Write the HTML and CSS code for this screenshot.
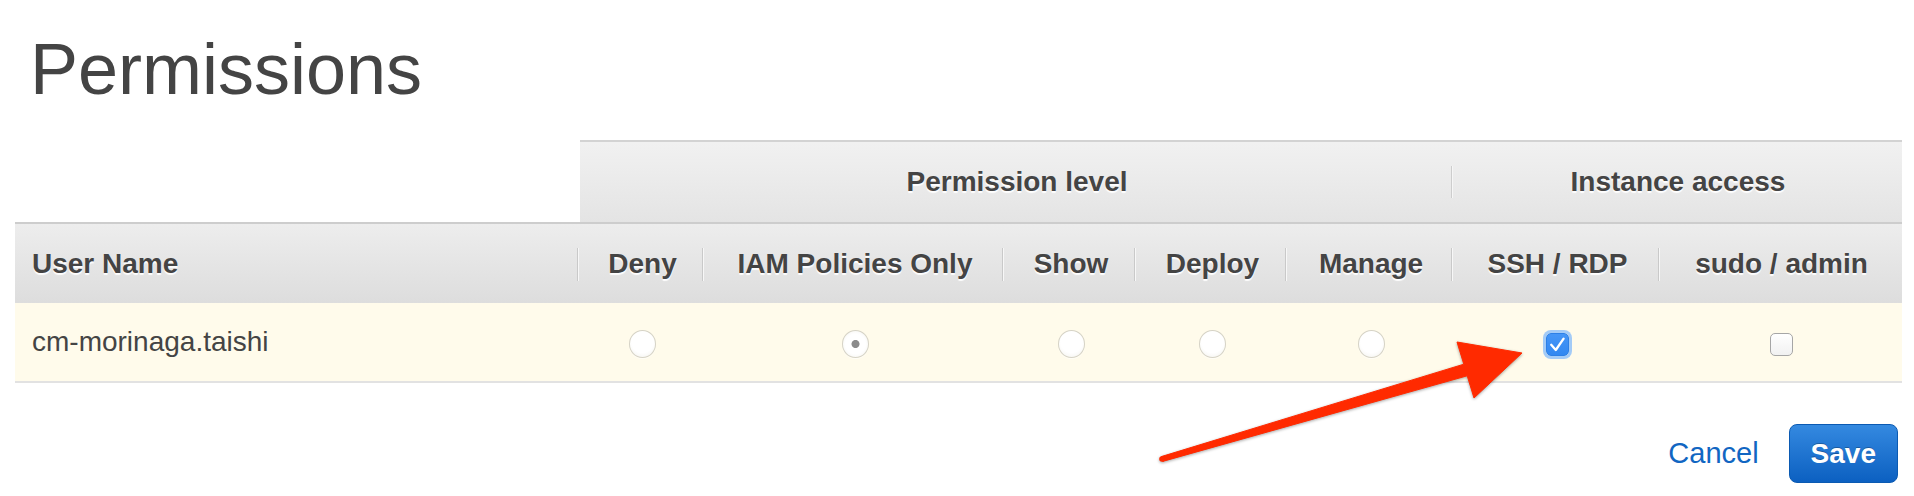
FILE: index.html
```html
<!DOCTYPE html>
<html lang="en">
<head>
<meta charset="utf-8">
<title>Permissions</title>
<link rel="stylesheet" href="styles.css">
</head>
<body>
<div class="page">
  <h1 class="title">Permissions</h1>
  <table class="perm">
    <colgroup>
      <col class="c-user"><col class="c-deny"><col class="c-iam"><col class="c-show"><col class="c-deploy"><col class="c-manage"><col class="c-ssh"><col class="c-sudo">
    </colgroup>
    <thead>
      <tr class="group">
        <th class="blank"></th>
        <th class="band" colspan="5">Permission level</th>
        <th class="band sep" colspan="2">Instance access</th>
      </tr>
      <tr class="cols">
        <th class="user">User Name</th>
        <th class="div">Deny</th>
        <th class="div">IAM Policies Only</th>
        <th class="div">Show</th>
        <th class="div">Deploy</th>
        <th class="div">Manage</th>
        <th class="div">SSH / RDP</th>
        <th class="div">sudo / admin</th>
      </tr>
    </thead>
    <tbody>
      <tr class="row">
        <td class="name">cm-morinaga.taishi</td>
        <td><span class="radio" role="radio" aria-checked="false"></span></td>
        <td><span class="radio on" role="radio" aria-checked="true"></span></td>
        <td><span class="radio" role="radio" aria-checked="false"></span></td>
        <td><span class="radio" role="radio" aria-checked="false"></span></td>
        <td><span class="radio" role="radio" aria-checked="false"></span></td>
        <td><span class="check on" role="checkbox" aria-checked="true"><svg width="23" height="23" viewBox="0 0 23 23"><path d="M5.2 11.8 L9.8 17 L17.6 5.6" fill="none" stroke="#fff" stroke-width="2.3" stroke-linecap="round" stroke-linejoin="round"/></svg></span></td>
        <td><span class="check" role="checkbox" aria-checked="false"></span></td>
      </tr>
    </tbody>
  </table>
  <div class="actions">
    <a class="cancel" href="#">Cancel</a>
    <button class="save" type="button">Save</button>
  </div>
</div>
<svg class="arrow" width="1914" height="496" viewBox="0 0 1914 496">
  <polygon points="1161.3,456.6 1463.8,364.2 1457,342 1522,353 1474,398 1467.2,375.8 1162.7,461.4" fill="#ff2a00" stroke="#ff2a00" stroke-width="1" stroke-linejoin="round"/>
  <circle cx="1162" cy="459" r="2.8" fill="#ff2a00"/>
</svg>
</body>
</html>
```

FILE: styles.css
```css
html, body {
  margin: 0;
  padding: 0;
  background: #ffffff;
}

body {
  position: relative;
  font-family: "Liberation Sans", Arial, Helvetica, sans-serif;
  color: #444444;
}

.page {
  padding: 27px 12px 0 15px;
}

.title {
  margin: 0 0 29px 15px;
  font-size: 72px;
  line-height: 84px;
  font-weight: 400;
  color: #444444;
}

.perm {
  border-collapse: separate;
  border-spacing: 0;
  table-layout: fixed;
  width: 1887px;
}

.c-user { width: 565px; }
.c-deny { width: 125px; }
.c-iam { width: 300px; }
.c-show { width: 132px; }
.c-deploy { width: 151px; }
.c-manage { width: 166px; }
.c-ssh { width: 207px; }
.c-sudo { width: 241px; }

.perm th {
  position: relative;
  padding: 0;
  font-size: 28px;
  font-weight: 700;
  color: #444444;
  text-shadow: 0 2px 1px rgba(255, 255, 255, 0.95);
  text-align: center;
  vertical-align: middle;
  white-space: nowrap;
}

.group {
  height: 82px;
}

.blank {
  border-top: 2px solid transparent;
  background: #ffffff;
}

.band {
  border-top: 2px solid #d3d3d3;
  background: linear-gradient(#f1f1f1, #e4e4e4);
}

.band.sep::before {
  content: "";
  position: absolute;
  left: -3px;
  top: 24px;
  width: 1px;
  height: 32px;
  background: #cdcdcd;
  box-shadow: 1px 0 0 #f6f6f6;
}

.cols {
  height: 81px;
}

.cols th {
  border-top: 2px solid #cdcdcd;
  background: linear-gradient(#ededed, #dddddd);
}

.cols th.user {
  text-align: left;
  padding-left: 17px;
}

.cols th.div::before {
  content: "";
  position: absolute;
  left: -3px;
  top: 24px;
  width: 1px;
  height: 33px;
  background: #c9c9c9;
  box-shadow: 1px 0 0 #f7f7f7;
}

.row {
  height: 80px;
}

.row td {
  padding: 0;
  background: #fffbeb;
  border-bottom: 2px solid #e2e2e2;
  text-align: center;
  vertical-align: middle;
}

.row td.name {
  text-align: left;
  padding-left: 17px;
  font-size: 28px;
  color: #444444;
}

.radio {
  display: block;
  box-sizing: border-box;
  width: 27px;
  height: 28px;
  margin: 4px auto 0;
  border-radius: 50%;
  border: 1px solid #d6d3c6;
  background: radial-gradient(circle at 50% 42%, #ffffff 55%, #f1f0ea 100%);
  box-shadow: 0 1px 0 rgba(255, 255, 255, 0.6);
}

.radio.on {
  background: radial-gradient(circle at 50% 50%, #8b8b8b 0 3.6px, #ffffff 4.4px 55%, #f1f0ea 100%);
}

.check {
  display: block;
  box-sizing: border-box;
  width: 23px;
  height: 23px;
  margin: 5px auto 0;
  border-radius: 5px;
  border: 1.5px solid #a6a6a6;
  background: linear-gradient(#ffffff, #f1f1f1);
}

.check.on {
  border: 1px solid #2d80e6;
  background: linear-gradient(#4596f7, #3288f1);
  box-shadow: 0 0 0 3px #a3cbf7;
}

.check svg {
  display: block;
  margin: -1px 0 0 -1px;
}

.actions {
  display: flex;
  justify-content: flex-end;
  align-items: center;
  gap: 30px;
  margin-top: 41px;
  padding-right: 4px;
}

.cancel {
  font-size: 29px;
  color: #1166c2;
  text-decoration: none;
}

.save {
  height: 59px;
  padding: 0 21px;
  border: 1px solid #0b5ab2;
  border-radius: 8px;
  background: linear-gradient(#3489e0, #0c60c1);
  color: #ffffff;
  font-family: "Liberation Sans", Arial, Helvetica, sans-serif;
  font-size: 28px;
  font-weight: 700;
  text-shadow: 0 -1px 0 rgba(0, 0, 0, 0.25);
  cursor: pointer;
}

.arrow {
  position: absolute;
  left: 0;
  top: 0;
  pointer-events: none;
  filter: drop-shadow(0 1px 1.5px rgba(0, 0, 0, 0.35));
}
```
